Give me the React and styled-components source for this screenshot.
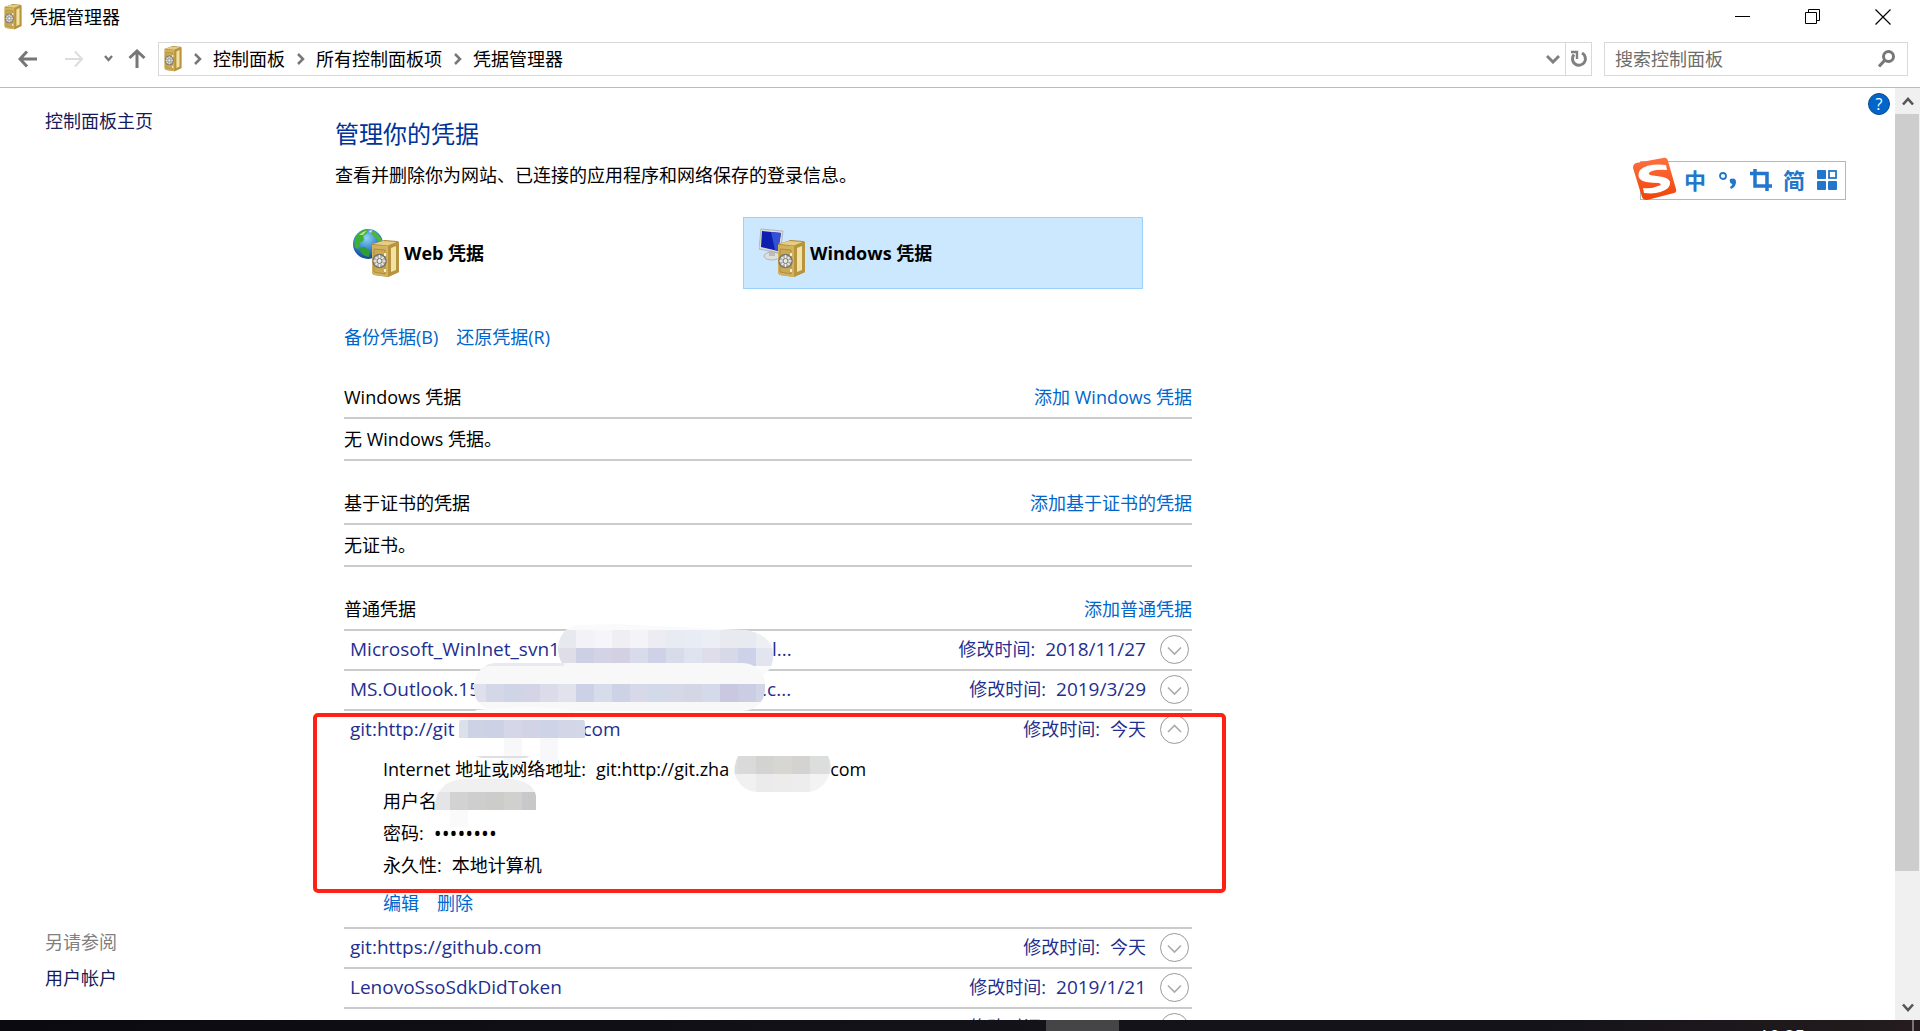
import React from 'react';
import styled, { createGlobalStyle } from 'styled-components';

const Global = createGlobalStyle`
  * { box-sizing: border-box; }
  html, body, #root { height: 100%; }
  body {
    margin: 0;
    overflow: hidden;
    background: #fff;
    color: #000;
    font: 18px/24px "Open Sans", "Noto Sans CJK SC", sans-serif;
  }
  button, input { font: inherit; color: inherit; }
  button { border: 0; padding: 0; background: none; }
  a { text-decoration: none; }
  h1, h2, p, dl, dd, dt, ul { margin: 0; padding: 0; font-weight: 400; }
  svg { display: block; flex: none; }
`;

const Window = styled.div`
  display: flex;
  flex-direction: column;
  height: 100vh;
`;

const TitleBar = styled.header`
  display: flex;
  align-items: center;
  height: 34px;
  padding: 0 2px 0 4px;
  gap: 8px;
`;

const Title = styled.span`
  flex: 1;
`;

const WindowButtons = styled.div`
  display: flex;
`;

const WindowButton = styled.button`
  display: grid;
  place-items: center;
  width: 70px;
  height: 34px;
`;

const NavBar = styled.nav`
  display: flex;
  align-items: center;
  height: 54px;
  padding: 4px 12px 8px 10px;
  border-bottom: 1px solid #bcbcbc;
  flex: none;
`;

const NavButton = styled.button`
  display: grid;
  place-items: center;
  width: ${(p) => p.$width}px;
  height: 32px;
`;

const AddressBar = styled.div`
  display: flex;
  align-items: center;
  flex: 1;
  height: 34px;
  margin-right: 12px;
  border: 1px solid #d9d9d9;
`;

const Crumbs = styled.div`
  display: flex;
  align-items: center;
  flex: 1;
  gap: 11px;
  padding-left: 5px;
`;

const Crumb = styled.a`
  color: #000;
`;

const RefreshButton = styled(NavButton)`
  border-left: 1px solid #d9d9d9;
`;

const SearchBox = styled.label`
  display: flex;
  align-items: center;
  width: 304px;
  height: 34px;
  padding: 0 12px 0 10px;
  border: 1px solid #d9d9d9;
`;

const SearchInput = styled.input`
  flex: 1;
  min-width: 0;
  border: 0;
  padding: 0;
  outline: 0;
  background: none;
  &::placeholder { color: #6d6d6d; opacity: 1; }
`;

const Body = styled.div`
  position: relative;
  display: flex;
  flex: 1;
  min-height: 0;
`;

const Sidebar = styled.aside`
  display: flex;
  flex-direction: column;
  justify-content: space-between;
  width: 300px;
  padding: 21px 0 30px 45px;
`;

const SideGroup = styled.div`
  display: flex;
  flex-direction: column;
  gap: 12px;
`;

const SideLink = styled.a`
  color: #15195a;
`;

const SideCaption = styled.span`
  color: #808080;
`;

const Main = styled.main`
  flex: 1;
  min-width: 0;
  overflow: hidden;
  padding: 28px 0 0 35px;
`;

const Heading = styled.h1`
  font-size: 24px;
  line-height: 36px;
  color: #003399;
`;

const Intro = styled.p`
  margin-top: 11px;
`;

const Vaults = styled.div`
  display: flex;
  gap: 6px;
  margin: 30px 0 0 2px;
`;

const Vault = styled.button`
  display: flex;
  align-items: center;
  gap: 3px;
  width: 400px;
  height: 72px;
  padding: 0 15px;
  font-weight: 700;
  border: 1px solid ${(p) => (p.$selected ? '#99d1ff' : 'transparent')};
  background: ${(p) => (p.$selected ? '#cce8ff' : 'transparent')};
`;

const Column = styled.div`
  position: relative;
  width: 848px;
  margin-left: 9px;
`;

const Link = styled.a`
  color: #0066cc;
`;

const Links = styled.div`
  display: flex;
  gap: 18px;
`;

const VaultLinks = styled(Links)`
  padding: 36px 0;
`;

const Section = styled.section`
  margin-bottom: 30px;
`;

const SectionHead = styled.div`
  display: flex;
  justify-content: space-between;
  height: 34px;
  border-bottom: 2px solid #cbcbcb;
`;

const SectionTitle = styled.h2`
  font-size: 18px;
`;

const Empty = styled.p`
  height: 42px;
  padding-top: 8px;
  border-bottom: 2px solid #cbcbcb;
`;

const Entry = styled.li`
  list-style: none;
  border-bottom: 2px solid #cbcbcb;
`;

const EntryRow = styled.div`
  display: flex;
  align-items: center;
  height: 38px;
  padding: 0 3px 2px 6px;
  color: #1f2f8f;
`;

const EntryName = styled.span`
  display: flex;
  align-items: center;
  flex: 1;
  font-size: 19px;
`;

const Modified = styled.span`
  display: flex;
  gap: 10px;
  margin-right: 14px;
`;

const DateText = styled.span`
  font-size: ${(p) => (p.$numeric ? 19 : 18)}px;
`;

const Toggle = styled.button`
  width: 29px;
  height: 29px;
`;

const Hidden = styled.span`
  width: ${(p) => p.$width}px;
`;

const Details = styled.dl`
  display: flex;
  flex-direction: column;
  gap: 8px;
  padding: 8px 0 0 39px;
`;

const Detail = styled.div`
  display: flex;
  gap: 10px;
`;

const DetailValue = styled.dd`
  display: flex;
  font-size: ${(p) => (p.$secret ? 21 : 18)}px;
`;

const DetailLinks = styled(Links)`
  padding: 14px 0 12px 39px;
`;

const Mosaic = styled.svg`
  position: absolute;
  left: 80px;
  top: 331px;
  pointer-events: none;
`;

const Highlight = styled.div`
  position: absolute;
  left: -31px;
  top: 424px;
  width: 913px;
  height: 180px;
  border: 4px solid #ff2114;
  border-radius: 5px;
  pointer-events: none;
`;

const HelpButton = styled.button`
  position: absolute;
  right: 30px;
  top: 5px;
  width: 22px;
  height: 22px;
  border-radius: 50%;
  border: 1px solid #0a4a86;
  background: #0066cc;
  color: #fff;
  font-size: 16px;
  line-height: 20px;
`;

const ImeBar = styled.div`
  position: absolute;
  right: 74px;
  top: 69px;
  display: flex;
  align-items: center;
  height: 43px;
`;

const ImeTools = styled.div`
  display: flex;
  align-items: center;
  justify-content: flex-end;
  gap: 11px;
  width: 206px;
  height: 39px;
  margin: 3px 0 0 -38px;
  padding-right: 7px;
  border: 1px solid #b3b6bd;
  background: #fff;
`;

const ImeButton = styled.button`
  display: grid;
  place-items: center;
  width: 22px;
  height: 24px;
  font-size: 22px;
  font-weight: 700;
  color: #2277cc;
`;

const ImeLogo = styled.svg`
  position: relative;
  z-index: 1;
`;

const ScrollBar = styled.div`
  display: flex;
  flex-direction: column;
  width: 25px;
  background: #f0f0f0;
`;

const ScrollButton = styled.button`
  display: grid;
  place-items: center;
  height: 26px;
`;

const ScrollTrack = styled.div`
  flex: 1;
`;

const ScrollThumb = styled.div`
  width: 24px;
  height: 86%;
  background: #cdcdcd;
`;

const TaskBar = styled.footer`
  display: flex;
  height: 11px;
  flex: none;
  overflow: hidden;
  background: linear-gradient(90deg, #0b0a10, #14131a 55%, #14131a 80%, #241c1e);
`;

const ActiveTask = styled.div`
  width: 73px;
  margin-left: 1046px;
  background: #454447;
`;

const Clock = styled.time`
  margin: 4px 107px 0 auto;
  color: #fff;
`;

const ShowDesktop = styled.div`
  width: 8px;
  border-left: 2px solid #77757a;
`;

const SafeShape = () => (
  <>
    <path d="M1 4L11 1Q12 0 14 0L26 1Q28 1 28 3V32L17 37L3 35Q1 34 1 32Z" fill="#b18c38" />
    <path d="M1 5L17 6V37L3 35Q1 34 1 32Z" fill="#d2b25e" />
    <path d="M2 4L12 1L26 2L17 5.500Z" fill="#e6cd86" />
    <path d="M17 6L28 2V32L17 37Z" fill="#b9943e" />
    <path d="M20 8L25 6V30L20 32Z" fill="#f2e2a4" />
    <path d="M3 9L14 10V34L3 32Z" fill="#cba852" stroke="#a5853a" strokeWidth=".8" />
    <circle cx="8.500" cy="21" r="6.500" fill="#b4b3ad" stroke="#77756f" strokeWidth="1.500" />
    <path d="M8.500 15V27M2.500 21H14.500M4.500 17L12.500 25M12.500 17L4.500 25" stroke="#eeeeea" strokeWidth="1.300" />
    <circle cx="8.500" cy="21" r="2.500" fill="#e9e9e6" stroke="#77756f" />
    <path d="M14 13v3M14 29v3" stroke="#f3ecd6" strokeWidth="2" />
  </>
);

const SafeIcon = () => (
  <svg width="18" height="26" viewBox="0 0 29 38" preserveAspectRatio="none" aria-hidden="true">
    <SafeShape />
  </svg>
);

const WebSafeIcon = () => (
  <svg width="48" height="50" viewBox="0 0 48 50" aria-hidden="true">
    <defs>
      <radialGradient id="sea" cx="45%" cy="30%" r="70%">
        <stop offset="0" stopColor="#8ed2f4" />
        <stop offset=".6" stopColor="#2f80cd" />
        <stop offset="1" stopColor="#153f96" />
      </radialGradient>
    </defs>
    <circle cx="15" cy="16" r="15" fill="url(#sea)" />
    <path d="M4 7Q9 1 15 1L14 5L10 8L11 12L7 15L5 21L2 20Q0 13 4 7Z" fill="#3fae35" />
    <path d="M20 3Q27 6 29 13L26 14L23 10L20 8L18 5Z" fill="#4fb53b" />
    <path d="M6 20L12 19L17 23L16 29Q9 29 6 20Z" fill="#2f9c34" />
    <path d="M6 7Q10 3 14 2.500L10 7Z" fill="#b4e886" />
    <path d="M16 3L19 2L18 5Z" fill="#dff2dd" />
    <g transform="translate(18 12)"><SafeShape /></g>
  </svg>
);

const PcSafeIcon = () => (
  <svg width="48" height="50" viewBox="0 0 48 50" aria-hidden="true">
    <ellipse cx="13" cy="28" rx="8" ry="4" fill="#dededc" stroke="#b4b4b2" />
    <path d="M10 21h6v7h-6z" fill="#bcbcba" />
    <path d="M2 1L24 3L21 25L0 21Z" fill="#dcdcda" stroke="#9a9a9a" strokeWidth=".6" />
    <path d="M3 3L22 5L19 23L2 19Z" fill="#0c1fae" />
    <path d="M12 4L22 5L19 23L16 22Z" fill="#3450d4" />
    <g transform="translate(18 12)"><SafeShape /></g>
  </svg>
);

const Stroke = ({ w, h, d, color = '#808080', width = 3 }) => (
  <svg width={w} height={h} viewBox={`0 0 ${w} ${h}`} fill="none" stroke={color} strokeWidth={width} aria-hidden="true">
    <path d={d} />
  </svg>
);

const CrumbArrow = () => <Stroke w={9} h={12} d="M2 1L7 6L2 11" color="#777" width={2.5} />;

const ToggleIcon = ({ open }) => (
  <svg width="29" height="29" viewBox="0 0 29 29" fill="none" aria-hidden="true">
    <circle cx="14.5" cy="14.5" r="14" stroke="#999" />
    <path d={open ? 'M8 17L14.5 10.5L21 17' : 'M8 12.5L14.5 19L21 12.5'} stroke="#aaa" strokeWidth="1.6" />
  </svg>
);

const entries = [
  { name: 'Microsoft_WinInet_svn1.', hidden: 207, tail: 'l...', date: '2018/11/27' },
  { name: 'MS.Outlook.15', hidden: 282, tail: '.c...', date: '2019/3/29' },
  {
    name: 'git:http://git',
    hidden: 128,
    tail: 'com',
    date: '今天',
    details: [
      { label: 'Internet 地址或网络地址:', value: 'git:http://git.zha', hidden: 101, tail: 'com' },
      { label: '用户名' },
      { label: '密码:', value: '••••••••', secret: true },
      { label: '永久性:', value: '本地计算机' },
    ],
  },
  { name: 'git:https://github.com', date: '今天' },
  { name: 'LenovoSsoSdkDidToken', date: '2019/1/21' },
  { name: '', date: '2019/1/21' },
];

const Credential = ({ item }) => (
  <Entry>
    <EntryRow>
      <EntryName>
        {item.name}
        {item.hidden && <Hidden $width={item.hidden} />}
        {item.tail}
      </EntryName>
      <Modified>
        <span>修改时间:</span>
        <DateText $numeric={item.date.includes('/')}>{item.date}</DateText>
      </Modified>
      <Toggle aria-label="展开" aria-expanded={Boolean(item.details)}>
        <ToggleIcon open={Boolean(item.details)} />
      </Toggle>
    </EntryRow>
    {item.details && (
      <>
        <Details>
          {item.details.map((d) => (
            <Detail key={d.label}>
              <dt>{d.label}</dt>
              <DetailValue $secret={d.secret}>
                {d.value}
                {d.hidden && <Hidden $width={d.hidden} />}
                {d.tail}
              </DetailValue>
            </Detail>
          ))}
        </Details>
        <DetailLinks>
          <Link href="#edit">编辑</Link>
          <Link href="#remove">删除</Link>
        </DetailLinks>
      </>
    )}
  </Entry>
);

const tiles = (x, y, colors) =>
  colors.map((c, i) => <rect key={`${x}-${y}-${i}`} x={x + i * 18} y={y} width="18" height="18" fill={c} />);

const Redactions = () => (
  <Mosaic width="480" height="220" viewBox="-20 0 480 220" aria-hidden="true">
    <defs>
      <clipPath id="m1"><path d="M132 5Q180 3 210 6L300 10Q329 14 329 35Q329 52 316 56H132Q114 46 114 28Q115 10 132 5Z" /></clipPath>
      <clipPath id="m2"><rect x="30" y="43" width="291" height="48" rx="22" /></clipPath>
      <clipPath id="m3"><rect x="15" y="96" width="126" height="44" rx="8" /></clipPath>
      <clipPath id="m4"><path d="M294 136H384Q391 150 380 164Q372 172 364 172H314Q300 172 292 158Q288 150 294 136Z" /></clipPath>
      <clipPath id="m5"><path d="M-9 190Q-10 176 -2 168Q5 159 24 159H68Q90 162 92 176V190Z" /></clipPath>
    </defs>
    <g clipPath="url(#m1)">
      <rect x="110" y="0" width="222" height="58" fill="#fafafb" />
      {tiles(96, 10, ['#ececf1', '#e8e8ef', '#f2f2f7', '#f5f5fa', '#eeeef3', '#f4f4f8', '#ececf2', '#e9ebf2', '#e8ecf4', '#eceef5', '#e9e9f0', '#e8eaf1', '#edeff4'])}
      {tiles(96, 28, ['#dfe0ea', '#dedde8', '#cdcfe4', '#d2d3e5', '#d2d0e2', '#d9dbea', '#cfd2e6', '#d8dcea', '#dfe3ef', '#dfdde9', '#d7d9e8', '#cdd2e8', '#e2e4ef'])}
    </g>
    <g clipPath="url(#m2)">
      <rect x="30" y="42" width="300" height="50" fill="#f8f8f9" />
      <rect x="30" y="42" width="90" height="4" fill="#e8e9f3" />
      {tiles(24, 64, ['#dfe0eb', '#d4d7e8', '#cfd4e7', '#d3d4e5', '#dbdcea', '#e0e2ec', '#ccd1e5', '#d6dcea', '#cdd2e6', '#d7d9e9', '#d2d9e9', '#d5d8e6', '#d5d6e5', '#d4daea', '#c8c9e0', '#cbcde3', '#d2d4e7'])}
    </g>
    <path d="M32 90Q90 84 130 90V100H20Z" fill="#fbfbfc" />
    <g clipPath="url(#m3)">
      {tiles(6, 100, ['#dce0eb', '#ced2e5', '#ccd1e6', '#d5d7e8', '#d2d4e5', '#ced4e7', '#d3d6e7', '#d3d8e9'])}
    </g>
    <path d="M60 118h18v26H60zM96 118h18v26H96z" fill="#f8f8fb" />
    <path d="M32 136H86L82 138H38Z" fill="#dfdfe2" />
    <g clipPath="url(#m4)">
      {tiles(276, 136, ['#ddd', '#dadada', '#d3d3d2', '#d6d6d3', '#d4d3d1', '#dcdddd', '#dfdfdf'])}
      {tiles(276, 154, ['#f1f1f1', '#f1f1f1', '#ebebeb', '#eeecea', '#ededed', '#f3f3f3', '#f4f4f4'])}
    </g>
    <g clipPath="url(#m5)">
      <rect x="-10" y="158" width="104" height="14" fill="#f0f0f0" />
      {tiles(-12, 172, ['#e4e5e7', '#d2d2d2', '#cecece', '#ccccca', '#d0d1cf', '#c8c8ca', '#d8d8d8'])}
    </g>
    <path d="M6 190h18v17H6z" fill="#fafafa" />
  </Mosaic>
);

export default function App() {
  return (
    <Window>
      <Global />
      <TitleBar>
        <SafeIcon />
        <Title>凭据管理器</Title>
        <WindowButtons>
          <WindowButton aria-label="最小化"><Stroke w={16} h={16} d="M0 7.5H15" color="#000" width={1} /></WindowButton>
          <WindowButton aria-label="还原"><Stroke w={16} h={16} d="M.5 3.5H11.5V14.5H.5ZM3.5 3V.5H14.5V11.5H12" color="#000" width={1} /></WindowButton>
          <WindowButton aria-label="关闭"><Stroke w={16} h={16} d="M.5 .5L15.5 15.5M15.5 .5L.5 15.5" color="#000" width={1.2} /></WindowButton>
        </WindowButtons>
      </TitleBar>
      <NavBar>
        <NavButton $width={36} aria-label="后退"><Stroke w={20} h={18} d="M9 1.5L2 9L9 16.5M2 9H19" color="#777" /></NavButton>
        <NavButton $width={56} aria-label="前进"><Stroke w={20} h={18} d="M11 1.5L18 9L11 16.5M18 9H1" color="#ddd" width={2} /></NavButton>
        <NavButton $width={13} aria-label="最近浏览的位置"><Stroke w={9} h={7} d="M1 1L4.500 5L8 1" color="#777" width={2.4} /></NavButton>
        <NavButton $width={43} aria-label="上移"><Stroke w={18} h={19} d="M1.500 9L9 2L16.500 9M9 2V19" color="#777" /></NavButton>
        <AddressBar>
          <Crumbs>
            <SafeIcon />
            <CrumbArrow />
            <Crumb href="#panel">控制面板</Crumb>
            <CrumbArrow />
            <Crumb href="#items">所有控制面板项</Crumb>
            <CrumbArrow />
            <Crumb href="#manager">凭据管理器</Crumb>
          </Crumbs>
          <NavButton $width={24} aria-label="上一个位置"><Stroke w={14} h={10} d="M1 2L7 8L13 2" width={3} /></NavButton>
          <RefreshButton $width={26} aria-label="刷新">
            <svg width="18" height="18" viewBox="0 0 18 18" fill="none" stroke="#808080" strokeWidth="3" aria-hidden="true">
              <path d="M12 3A6.500 6.500 0 1 1 4 4.500" />
              <path d="M1 2H7V9" strokeWidth="2.400" />
            </svg>
          </RefreshButton>
        </AddressBar>
        <SearchBox>
          <SearchInput type="text" placeholder="搜索控制面板" aria-label="搜索控制面板" />
          <svg width="17" height="18" viewBox="0 0 17 18" fill="none" stroke="#777" aria-hidden="true">
            <circle cx="10.500" cy="6.500" r="5" strokeWidth="3" />
            <path d="M7 10L1 16.500" strokeWidth="3" />
          </svg>
        </SearchBox>
      </NavBar>
      <Body>
        <Sidebar>
          <SideLink href="#home">控制面板主页</SideLink>
          <SideGroup>
            <SideCaption>另请参阅</SideCaption>
            <SideLink href="#accounts">用户帐户</SideLink>
          </SideGroup>
        </Sidebar>
        <Main>
          <Heading>管理你的凭据</Heading>
          <Intro>查看并删除你为网站、已连接的应用程序和网络保存的登录信息。</Intro>
          <Vaults>
            <Vault><WebSafeIcon />Web 凭据</Vault>
            <Vault $selected><PcSafeIcon />Windows 凭据</Vault>
          </Vaults>
          <Column>
            <VaultLinks>
              <Link href="#backup">备份凭据(B)</Link>
              <Link href="#restore">还原凭据(R)</Link>
            </VaultLinks>
            <Section>
              <SectionHead><SectionTitle>Windows 凭据</SectionTitle><Link href="#add-windows">添加 Windows 凭据</Link></SectionHead>
              <Empty>无 Windows 凭据。</Empty>
            </Section>
            <Section>
              <SectionHead><SectionTitle>基于证书的凭据</SectionTitle><Link href="#add-cert">添加基于证书的凭据</Link></SectionHead>
              <Empty>无证书。</Empty>
            </Section>
            <Section>
              <SectionHead><SectionTitle>普通凭据</SectionTitle><Link href="#add-generic">添加普通凭据</Link></SectionHead>
              <ul>{entries.map((e, i) => <Credential key={i} item={e} />)}</ul>
            </Section>
            <Redactions />
            <Highlight />
          </Column>
        </Main>
        <HelpButton aria-label="帮助">?</HelpButton>
        <ImeBar>
          <ImeLogo width="46" height="43" viewBox="0 0 46 43" aria-hidden="true">
            <defs>
              <linearGradient id="ime" x1="0" y1="0" x2="0" y2="1">
                <stop offset="0" stopColor="#ff7040" />
                <stop offset="1" stopColor="#ee4407" />
              </linearGradient>
            </defs>
            <path d="M4 6L31 1Q35 0 36 4L44 32Q45 35 42 36L15 43Q11 43 10 40L1 11Q1 7 4 6Z" fill="url(#ime)" />
            <path d="M34 8Q16 6 8 13Q3 22 14 25Q20 26 27 26Q31 28 26 29Q20 32 11 31L12 36Q28 38 36 31Q42 23 31 20L18 18Q15 16 20 14Q26 12 35 13Z" fill="#fff" />
          </ImeLogo>
          <ImeTools>
            <ImeButton>中</ImeButton>
            <ImeButton aria-label="标点">
              <svg width="18" height="20" viewBox="0 0 18 20" aria-hidden="true">
                <circle cx="4" cy="6" r="3" fill="none" stroke="#2277cc" strokeWidth="1.800" />
                <path d="M11 9Q17 7 17 12Q17 17 12 19L11 17Q14 15 13 14Q10 13 11 9Z" fill="#2277cc" />
              </svg>
            </ImeButton>
            <ImeButton aria-label="截图"><Stroke w={22} h={22} d="M0 4.500H17V22M5 0V17H22" color="#2277cc" width={3.5} /></ImeButton>
            <ImeButton>简</ImeButton>
            <ImeButton aria-label="工具箱">
              <svg width="20" height="20" viewBox="0 0 20 20" fill="#2277cc" aria-hidden="true">
                <rect width="9" height="9" rx="1" />
                <rect y="11" width="9" height="9" rx="1" />
                <rect x="11" y="11" width="9" height="9" rx="1" />
                <rect x="12" y="1" width="7" height="7" fill="none" stroke="#2277cc" strokeWidth="1.800" />
              </svg>
            </ImeButton>
          </ImeTools>
        </ImeBar>
        <ScrollBar>
          <ScrollButton aria-label="向上滚动"><Stroke w={12} h={9} d="M1 7.500L6 2L11 7.500" color="#555" width={2.6} /></ScrollButton>
          <ScrollTrack><ScrollThumb /></ScrollTrack>
          <ScrollButton aria-label="向下滚动"><Stroke w={12} h={9} d="M1 1.500L6 7L11 1.500" color="#555" width={2.6} /></ScrollButton>
        </ScrollBar>
      </Body>
      <TaskBar>
        <ActiveTask />
        <Clock>10:25</Clock>
        <ShowDesktop />
      </TaskBar>
    </Window>
  );
}
